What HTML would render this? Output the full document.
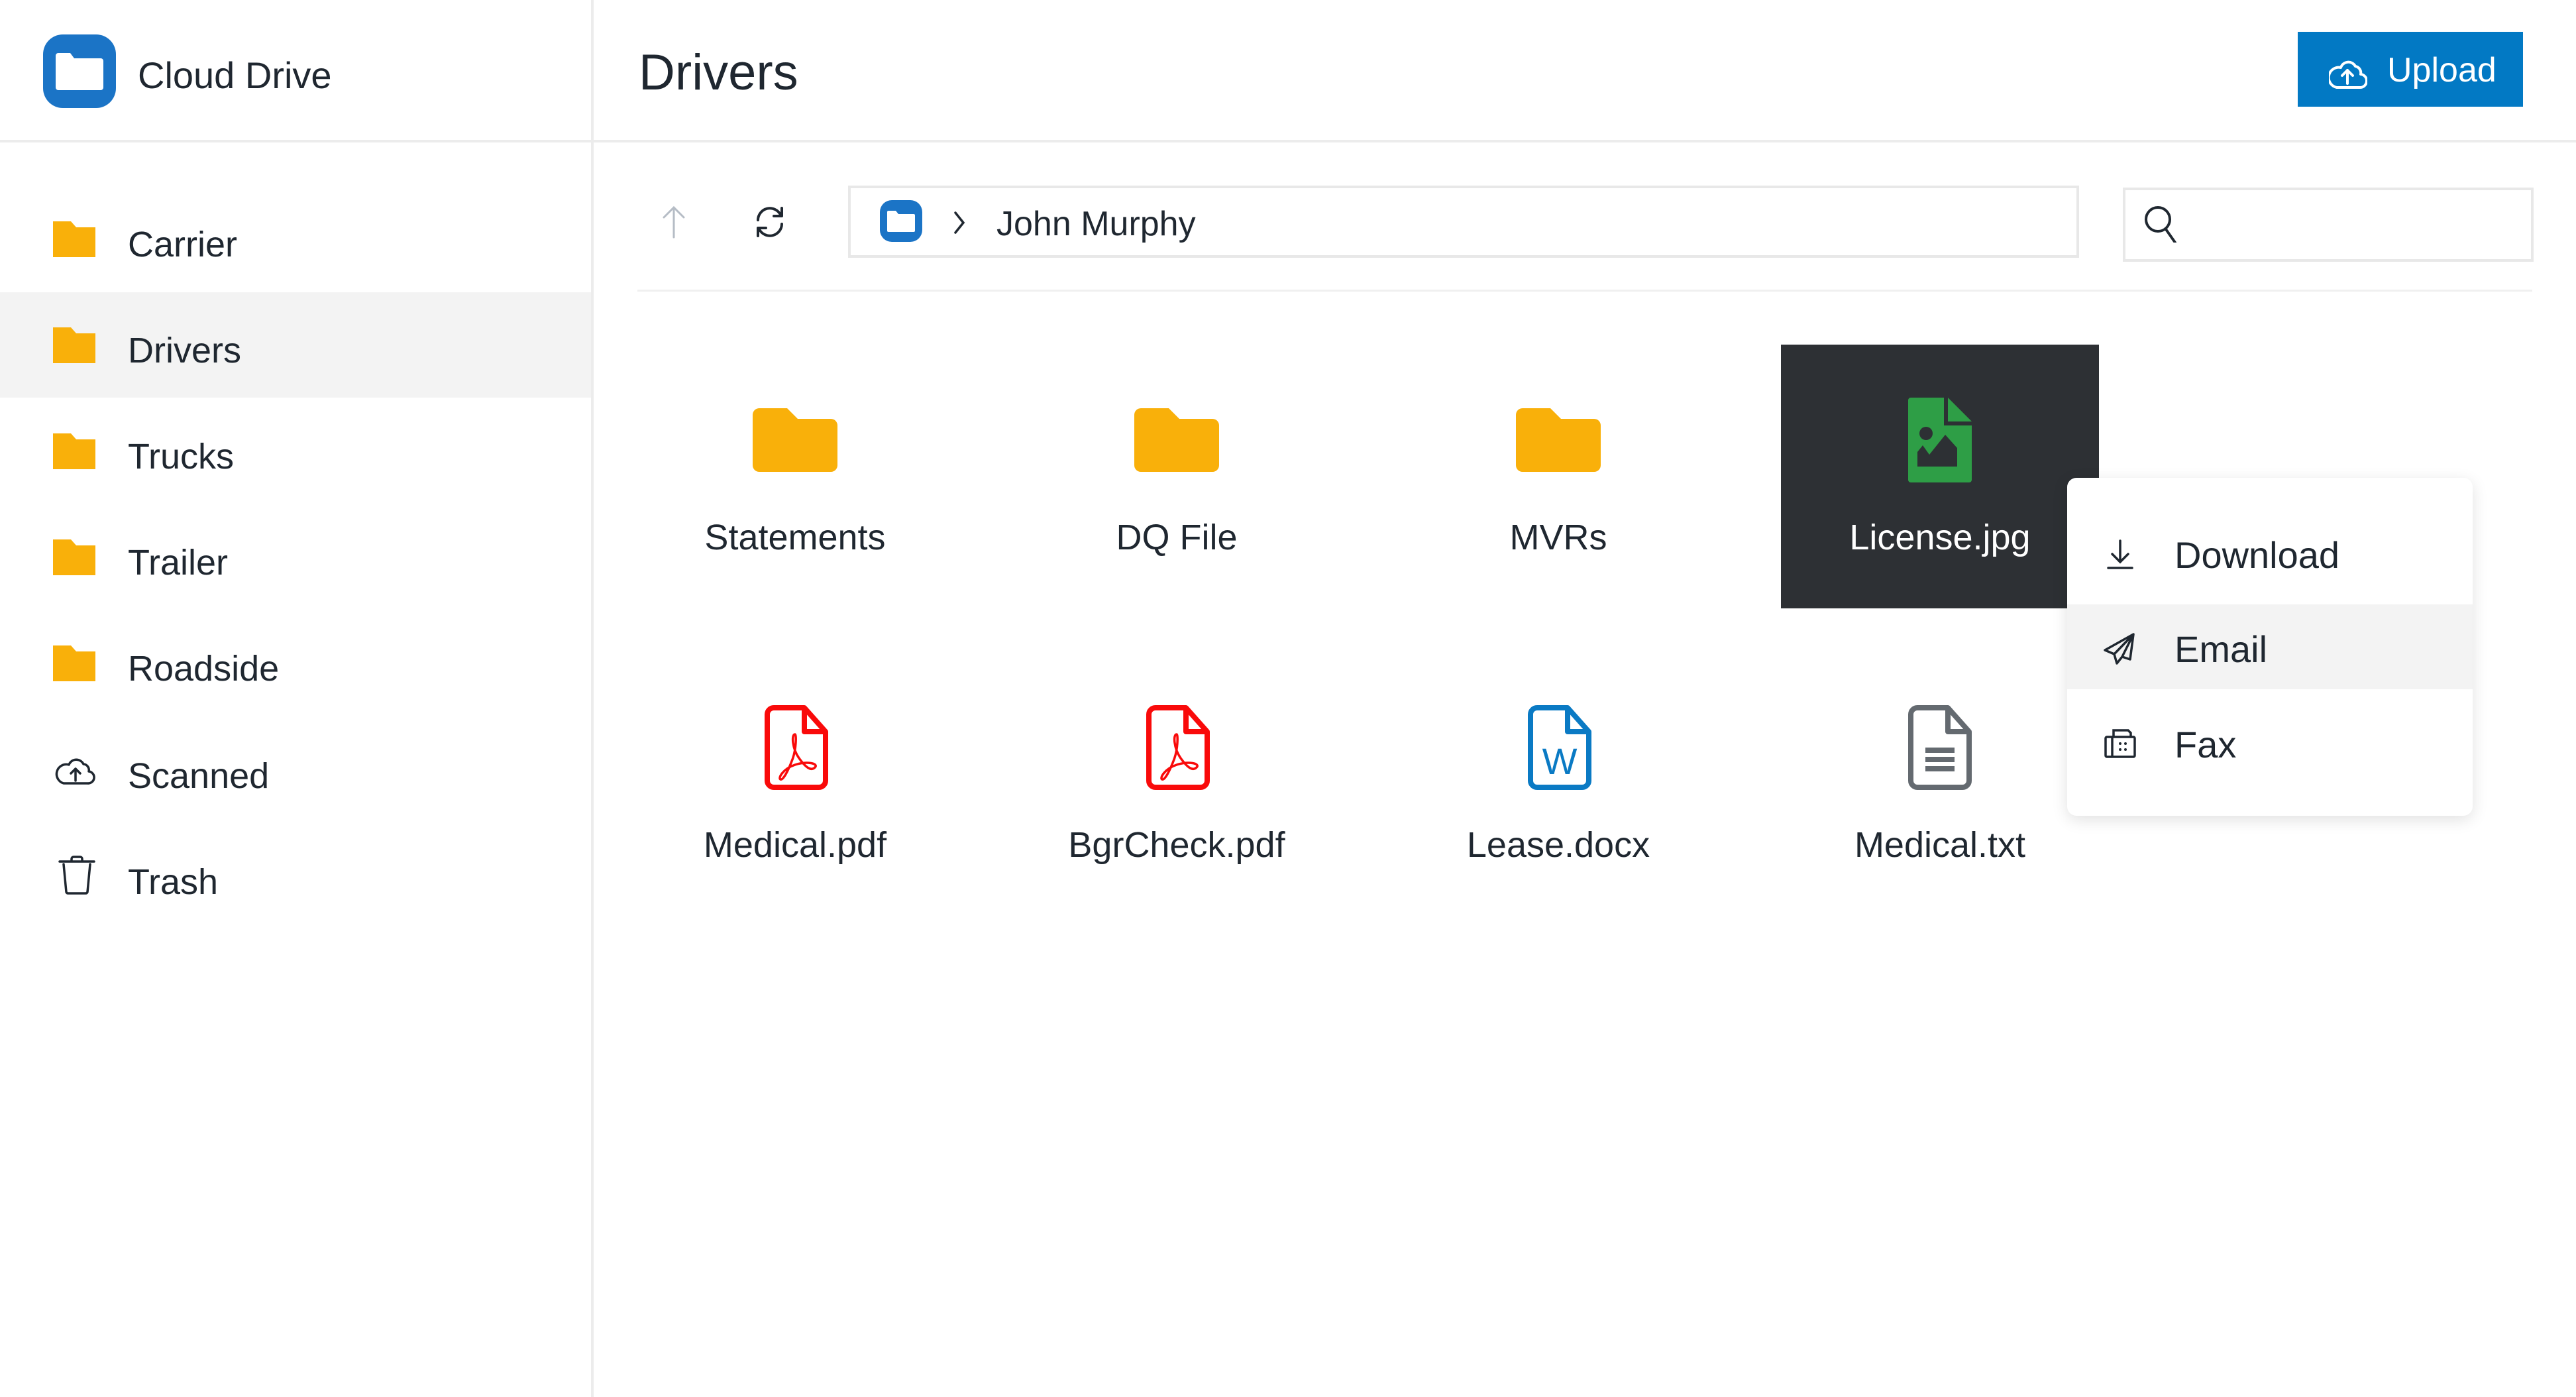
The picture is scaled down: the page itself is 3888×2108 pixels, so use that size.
<!DOCTYPE html>
<html><head><meta charset="utf-8"><style>
*{margin:0;padding:0;box-sizing:border-box}
body{width:3888px;height:2108px;background:#fff;font-family:"Liberation Sans",sans-serif;color:#1f2730;position:relative;overflow:hidden}
.a{position:absolute}
.t{position:absolute;font-size:54px;white-space:nowrap;line-height:1}
.lbl{position:absolute;width:480px;text-align:center;font-size:54px;line-height:1;white-space:nowrap}
</style></head><body>
<!-- sidebar border -->
<div class="a" style="left:892px;top:0;width:4px;height:2108px;background:#ececec"></div>
<div class="a" style="left:0;top:211px;width:3888px;height:4px;background:#ececec"></div>
<!-- logo -->
<div class="a" style="left:65px;top:52px;width:110px;height:111px;background:#1b74c6;border-radius:30px"></div>
<svg class="a" style="left:84px;top:80px" width="72" height="56" viewBox="0 0 72 56"><path d="M4 0H22L28 8H68a4 4 0 0 1 4 4V52a4 4 0 0 1-4 4H4a4 4 0 0 1-4-4V4a4 4 0 0 1 4-4Z" fill="#fff"/></svg>
<div class="t" style="left:208px;top:86px;font-size:56px">Cloud Drive</div>
<div class="t" style="left:964px;top:72px;font-size:76px">Drivers</div>
<!-- upload -->
<div class="a" style="left:3468px;top:48px;width:340px;height:113px;background:#0279c4"></div>
<svg class="a" style="left:3515px;top:84px" width="58" height="52" viewBox="0 0 58 52" fill="none" stroke="#fff" stroke-width="4" stroke-linecap="round" stroke-linejoin="round"><path d="M14 48H46a10 10 0 0 0 2-20 10 10 0 0 0-8-12 12 12 0 0 0-22 2 12 12 0 0 0-6 30Z"/><path d="M28 42V22M20 30l8-8 8 8"/></svg>
<div class="t" style="left:3603px;top:80px;font-size:52px;color:#fff">Upload</div>
<!-- sidebar items -->
<div class="a" style="left:0;top:441px;width:892px;height:159px;background:#f3f3f3"></div>
<svg width="0" height="0" style="position:absolute"><defs><path id="sf" d="M0 0H27L35 9H64V54H0Z" fill="#f9b00a"/></defs></svg>
<svg class="a" style="left:80px;top:334px" width="64" height="54"><use href="#sf"/></svg>
<div class="t" style="left:193px;top:342px">Carrier</div>
<svg class="a" style="left:80px;top:494px" width="64" height="54"><use href="#sf"/></svg>
<div class="t" style="left:193px;top:502px">Drivers</div>
<svg class="a" style="left:80px;top:654px" width="64" height="54"><use href="#sf"/></svg>
<div class="t" style="left:193px;top:662px">Trucks</div>
<svg class="a" style="left:80px;top:814px" width="64" height="54"><use href="#sf"/></svg>
<div class="t" style="left:193px;top:822px">Trailer</div>
<svg class="a" style="left:80px;top:974px" width="64" height="54"><use href="#sf"/></svg>
<div class="t" style="left:193px;top:982px">Roadside</div>
<svg class="a" style="left:82px;top:1138px" width="64" height="48" viewBox="0 0 64 48" fill="none" stroke="#1f2730" stroke-width="3.5" stroke-linecap="round" stroke-linejoin="round"><path d="M14 44H50a9 9 0 0 0 2-18 9 9 0 0 0-8-11 12 12 0 0 0-22 1 12 12 0 0 0-8 28Z"/><path d="M32 40V22M25 29l7-7 7 7"/></svg>
<div class="t" style="left:193px;top:1144px">Scanned</div>
<svg class="a" style="left:88px;top:1290px" width="56" height="60" viewBox="0 0 56 60" fill="none" stroke="#1f2730" stroke-width="3.5" stroke-linecap="round" stroke-linejoin="round"><path d="M2 10H54M20 10V6a3 3 0 0 1 3-3h10a3 3 0 0 1 3 3v4M8 14l4 42a3 3 0 0 0 3 2H41a3 3 0 0 0 3-2l4-42"/></svg>
<div class="t" style="left:193px;top:1304px">Trash</div>
<!-- toolbar -->
<svg class="a" style="left:996px;top:310px" width="42" height="50" viewBox="0 0 42 50" fill="none" stroke="#b6bdc6" stroke-width="3" stroke-linecap="round"><path d="M21 48V4M6 18L21 3l15 15"/></svg>
<svg class="a" style="left:1136px;top:310px" width="52" height="50" viewBox="0 0 52 50" fill="none" stroke="#1f2730" stroke-width="4" stroke-linecap="round" stroke-linejoin="round"><path d="M8 22a18 18 0 0 1 34-8M44 4V16H32M44 28a18 18 0 0 1-34 8M8 46V34H20"/></svg>
<div class="a" style="left:1280px;top:280px;width:1858px;height:109px;border:4px solid #e8e8e8"></div>
<div class="a" style="left:1328px;top:302px;width:64px;height:63px;background:#1b74c6;border-radius:18px"></div>
<svg class="a" style="left:1339px;top:318px" width="42" height="32" viewBox="0 0 42 32"><path d="M2 0H13L17 5H40a2 2 0 0 1 2 2V30a2 2 0 0 1-2 2H2a2 2 0 0 1-2-2V2a2 2 0 0 1 2-2Z" fill="#fff"/></svg>
<svg class="a" style="left:1438px;top:318px" width="24" height="36" viewBox="0 0 24 36" fill="none" stroke="#1f2730" stroke-width="3.5" stroke-linecap="round"><path d="M4 3l12 15L4 33"/></svg>
<div class="t" style="left:1504px;top:312px;font-size:52px">John Murphy</div>
<div class="a" style="left:3204px;top:283px;width:620px;height:112px;border:4px solid #e8e8e8"></div>
<svg class="a" style="left:3236px;top:310px" width="52" height="56" viewBox="0 0 52 56" fill="none" stroke="#1f2730" stroke-width="4" stroke-linecap="round"><circle cx="21" cy="21" r="18"/><path d="M33 36l14 20"/></svg>
<div class="a" style="left:962px;top:437px;width:2860px;height:3px;background:#f0f0f0"></div>
<!-- grid folders -->
<svg width="0" height="0" style="position:absolute"><defs><path id="gf" d="M10 0H52L68 16H118a10 10 0 0 1 10 10V86a10 10 0 0 1-10 10H10A10 10 0 0 1 0 86V10A10 10 0 0 1 10 0Z" fill="#f9b00a"/>
<g id="doc" fill="none" stroke-width="8" stroke-linejoin="round"><path d="M14 4H60L92 40V114a10 10 0 0 1-10 10H14a10 10 0 0 1-10-10V14A10 10 0 0 1 14 4Z"/><path d="M60 4V40H92"/></g>
<path id="acro" fill="none" stroke-width="3.5" d="M46 44c-6 0-4 22 6 36s18 20 24 14-12-10-30-4-26 20-22 22 12-14 18-30 6-38 4-38Z"/></defs></svg>
<svg class="a" style="left:1136px;top:616px" width="128" height="96"><use href="#gf"/></svg>
<div class="lbl" style="left:960px;top:784px">Statements</div>
<svg class="a" style="left:1712px;top:616px" width="128" height="96"><use href="#gf"/></svg>
<div class="lbl" style="left:1536px;top:784px">DQ File</div>
<svg class="a" style="left:2288px;top:616px" width="128" height="96"><use href="#gf"/></svg>
<div class="lbl" style="left:2112px;top:784px">MVRs</div>
<!-- selected -->
<div class="a" style="left:2688px;top:520px;width:480px;height:398px;background:#2d3034"></div>
<svg class="a" style="left:2880px;top:600px" width="96" height="128" viewBox="0 0 96 128"><path d="M4 0H54V42H96V124a4 4 0 0 1-4 4H4a4 4 0 0 1-4-4V4a4 4 0 0 1 4-4Z M60 0L96 36H60Z" fill="#2e9e46"/><circle cx="27" cy="54" r="10" fill="#2d3034"/><path d="M14 104V82l8-10 10 14 24-30 18 20v28Z" fill="#2d3034"/></svg>
<div class="lbl" style="left:2688px;top:784px;color:#fff">License.jpg</div>
<!-- row 2 -->
<svg class="a" style="left:1154px;top:1064px" width="96" height="128" viewBox="0 0 96 128" stroke="#f90a0a"><use href="#doc"/><use href="#acro"/></svg>
<div class="lbl" style="left:960px;top:1248px">Medical.pdf</div>
<svg class="a" style="left:1730px;top:1064px" width="96" height="128" viewBox="0 0 96 128" stroke="#f90a0a"><use href="#doc"/><use href="#acro"/></svg>
<div class="lbl" style="left:1536px;top:1248px">BgrCheck.pdf</div>
<svg class="a" style="left:2306px;top:1064px" width="96" height="128" viewBox="0 0 96 128" stroke="#0a7ac4"><use href="#doc"/><text x="48" y="104" text-anchor="middle" font-family="Liberation Sans" font-size="56" fill="#0a7ac4" stroke="none">W</text></svg>
<div class="lbl" style="left:2112px;top:1248px">Lease.docx</div>
<svg class="a" style="left:2880px;top:1064px" width="96" height="128" viewBox="0 0 96 128" stroke="#646a70"><use href="#doc"/><path d="M26 68H70M26 82H70M26 96H70" stroke-width="8"/></svg>
<div class="lbl" style="left:2688px;top:1248px">Medical.txt</div>
<!-- menu -->
<div class="a" style="left:3120px;top:721px;width:612px;height:510px;background:#fff;border-radius:14px;box-shadow:0 6px 24px rgba(0,0,0,.12)"></div>
<div class="a" style="left:3120px;top:912px;width:612px;height:128px;background:#f3f3f3"></div>
<svg class="a" style="left:3178px;top:814px" width="44" height="46" viewBox="0 0 44 46" fill="none" stroke="#1f2730" stroke-width="3.5" stroke-linecap="round"><path d="M22 2V34M10 22l12 12 12-12M4 43H40"/></svg>
<div class="t" style="left:3282px;top:810px;font-size:56px">Download</div>
<svg class="a" style="left:3174px;top:954px" width="50" height="50" viewBox="0 0 50 50" fill="none" stroke="#1f2730" stroke-width="3.5" stroke-linejoin="round"><path d="M46 3L3 27l14 6 4 14 8-10 12 4Z M46 3L17 33M46 3L29 37"/></svg>
<div class="t" style="left:3282px;top:952px;font-size:56px">Email</div>
<svg class="a" style="left:3176px;top:1098px" width="48" height="46" viewBox="0 0 48 46" fill="none" stroke="#1f2730" stroke-width="3.5"><rect x="2" y="14" width="44" height="30" rx="2"/><path d="M12 14V44M14 14V4h22l4 4v6"/><g fill="#1f2730" stroke="none"><circle cx="24" cy="24" r="2"/><circle cx="32" cy="24" r="2"/><circle cx="24" cy="33" r="2"/><circle cx="32" cy="33" r="2"/></g></svg>
<div class="t" style="left:3282px;top:1096px;font-size:56px">Fax</div>
</body></html>
